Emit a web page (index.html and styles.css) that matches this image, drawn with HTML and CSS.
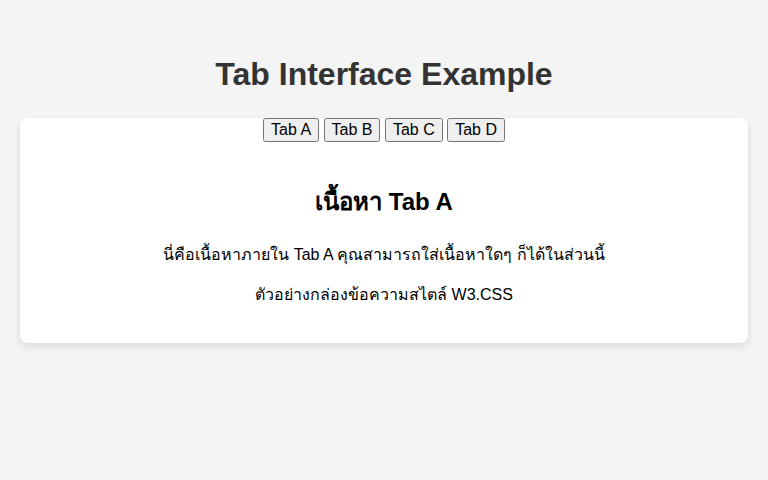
FILE: index.html
```html
<!DOCTYPE html>
<html lang="th">
<head>
    <meta charset="UTF-8">
    <meta name="viewport" content="width=device-width, initial-scale=1.0">
    <title>Tab Interface Example</title>
    <link rel="stylesheet" href="styles.css">
</head>
<body>
    <h1 class="page-title">Tab Interface Example</h1>

    <div class="tab-card">
        <div class="tab-bar">
            <button class="tab-button" onclick="openTab('tabA')">Tab A</button>
            <button class="tab-button" onclick="openTab('tabB')">Tab B</button>
            <button class="tab-button" onclick="openTab('tabC')">Tab C</button>
            <button class="tab-button" onclick="openTab('tabD')">Tab D</button>
        </div>

        <div class="tab-content" id="tabA">
            <h2>เนื้อหา Tab A</h2>
            <p>นี่คือเนื้อหาภายใน Tab A คุณสามารถใส่เนื้อหาใดๆ ก็ได้ในส่วนนี้</p>
            <p>ตัวอย่างกล่องข้อความสไตล์ W3.CSS</p>
        </div>
        <div class="tab-content hidden" id="tabB">
            <h2>เนื้อหา Tab B</h2>
            <p>นี่คือเนื้อหาภายใน Tab B</p>
        </div>
        <div class="tab-content hidden" id="tabC">
            <h2>เนื้อหา Tab C</h2>
            <p>นี่คือเนื้อหาภายใน Tab C</p>
        </div>
        <div class="tab-content hidden" id="tabD">
            <h2>เนื้อหา Tab D</h2>
            <p>นี่คือเนื้อหาภายใน Tab D</p>
        </div>
    </div>

    <script>
        // Show one panel, hide the others
        function openTab(id) {
            document.querySelectorAll('.tab-content').forEach(panel => {
                panel.classList.toggle('hidden', panel.id !== id);
            });
        }
    </script>
</body>
</html>
```

FILE: styles.css
```css
body {
    margin: 0;
    padding: 20px;
    font-family: 'Liberation Sans', Arial, 'Noto Sans', sans-serif;
    font-size: 16px;
    line-height: 1.5;
    background: #f4f4f4;
    color: #000;
}

.page-title {
    text-align: center;
    font-size: 32px;
    color: #333;
    margin: 30px 0 20px;
}

.tab-card {
    background: white;
    border-radius: 8px;
    box-shadow: 0 4px 8px rgba(0, 0, 0, 0.1);
}

.tab-bar {
    text-align: center;
    line-height: normal;
}

.tab-button {
    font-family: inherit;
    font-size: 16px;
    padding: 1px 6px;
    cursor: pointer;
}

.tab-content {
    padding: 20px;
    text-align: center;
}

.tab-content h2 {
    font-size: 24px;
    margin: 22px 0 23px;
}

.tab-content p {
    margin: 16px 0;
}

.hidden {
    display: none;
}
```
